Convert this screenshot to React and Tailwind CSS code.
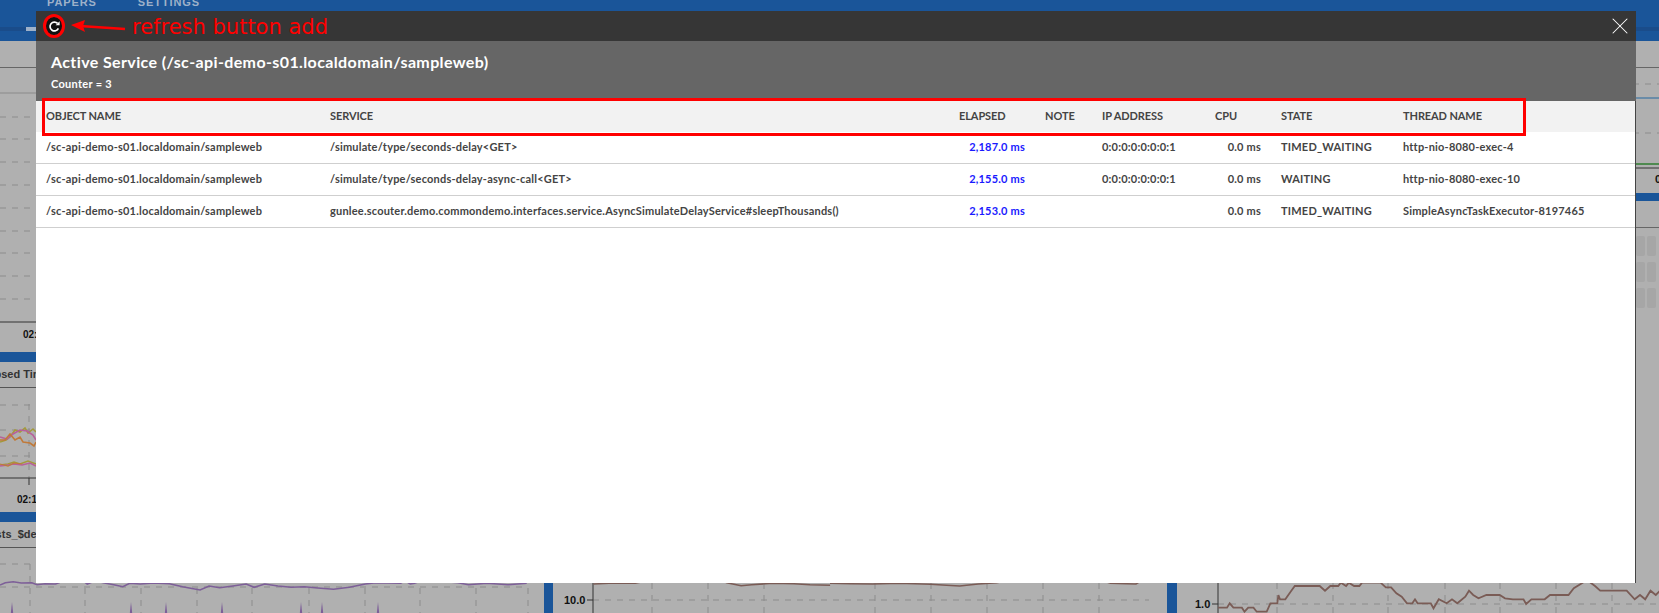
import { X } from "lucide-react";

const sx = 1 / 1.889;

// traced from the chart strips: x in zoom px, y in zoom px
const toPoints = (list, ox, fx, oy = 0) =>
  list.map(([x, y]) => `${(x * fx + ox).toFixed(1)},${(y / 3 + oy).toFixed(1)}`).join(" ");

const purpleLine = [
  [0, 75], [10, 68], [25, 65], [40, 69], [60, 68], [70, 74], [85, 71], [105, 72], [125, 60], [160, 66], [165, 72], [180, 62],
  [195, 68], [215, 74], [232, 80], [245, 70], [265, 72], [290, 69], [320, 71], [345, 80], [360, 85], [378, 90], [395, 78],
  [415, 83], [440, 78], [465, 72], [480, 82], [500, 72], [525, 78], [550, 82], [575, 80], [600, 84], [630, 88], [660, 82],
  [690, 72], [710, 68], [757, 70], [765, 62], [775, 72], [783, 70], [800, 60], [865, 68], [885, 74], [920, 70], [960, 74], [995, 70],
];

const brownLeft = [[1121, 72], [1160, 69], [1200, 70], [1230, 60], [1360, 60], [1373, 68], [1400, 77], [1420, 74], [1460, 70], [1500, 71], [1530, 74], [1568, 76]];
const brownMid = [[0, 70], [40, 71], [80, 72], [130, 70], [190, 73], [220, 76], [245, 78], [280, 72], [315, 68], [340, 60], [510, 60], [530, 70], [560, 71], [578, 72], [590, 60]];

const brownRight = [
  [733, 143], [750, 143], [755, 130], [762, 143], [778, 143], [783, 155], [790, 143], [800, 143], [806, 155], [825, 155], [832, 130],
  [845, 130], [847, 105], [850, 118], [860, 118], [870, 95], [878, 78], [925, 78], [935, 92], [945, 78], [960, 78], [965, 68], [975, 78],
  [980, 68], [990, 78], [1000, 78], [1005, 68], [1040, 68], [1050, 82], [1060, 82], [1070, 100], [1080, 110], [1090, 130], [1100, 130],
  [1105, 118], [1110, 130], [1135, 130], [1140, 145], [1150, 118], [1165, 130], [1175, 118], [1185, 130], [1200, 110], [1207, 92],
  [1215, 105], [1225, 115], [1240, 105], [1265, 105], [1275, 115], [1290, 118], [1310, 118], [1315, 132], [1325, 118], [1350, 118],
  [1360, 105], [1395, 105], [1405, 85], [1418, 72], [1430, 60], [1445, 78], [1455, 92], [1505, 92], [1520, 118], [1530, 105], [1540, 118],
  [1550, 92], [1560, 105], [1568, 92],
];

const rows = [
  {
    object: "/sc-api-demo-s01.localdomain/sampleweb",
    service: "/simulate/type/seconds-delay<GET>",
    elapsed: "2,187.0 ms",
    ip: "0:0:0:0:0:0:0:1",
    cpu: "0.0 ms",
    state: "TIMED_WAITING",
    thread: "http-nio-8080-exec-4",
  },
  {
    object: "/sc-api-demo-s01.localdomain/sampleweb",
    service: "/simulate/type/seconds-delay-async-call<GET>",
    elapsed: "2,155.0 ms",
    ip: "0:0:0:0:0:0:0:1",
    cpu: "0.0 ms",
    state: "WAITING",
    thread: "http-nio-8080-exec-10",
  },
  {
    object: "/sc-api-demo-s01.localdomain/sampleweb",
    service: "gunlee.scouter.demo.commondemo.interfaces.service.AsyncSimulateDelayService#sleepThousands()",
    elapsed: "2,153.0 ms",
    ip: "",
    cpu: "0.0 ms",
    state: "TIMED_WAITING",
    thread: "SimpleAsyncTaskExecutor-8197465",
  },
];

function Background() {
  return (
    <div className="flex h-full flex-col bg-[#b0b0b0] font-['Liberation_Sans',sans-serif]">
      <div className="h-[41px] shrink-0 bg-[#1a5599]">
        <div className="flex h-[27px] gap-[41px] pl-[47px]">
          <span className="-mt-[5px] text-[11px] leading-[14px] font-bold tracking-[0.9px] text-[#9eb1c9]">PAPERS</span>
          <span className="-mt-[5px] text-[11px] leading-[14px] font-bold tracking-[0.9px] text-[#9eb1c9]">SETTINGS</span>
        </div>
        <div className="flex h-[4px] bg-[#1a4c8a]">
          <div className="ml-[26px] w-[40px] bg-[#9eb1c9]" />
        </div>
      </div>
      <div className="flex min-h-0 flex-1">
        <div className="flex w-[544px] shrink-0 flex-col">
          <div className="h-[27px] border-b border-[#666]" />
          <svg className="h-[284px] w-full">
            <line x1="0" x2="544" y1="25" y2="25" stroke="#8a8a8a" />
            {[49, 71, 94, 117, 140, 163, 185, 208, 231].map((y) => (
              <line key={y} x1="0" x2="544" y1={y} y2={y} stroke="#8c8c8c" strokeDasharray="6 6" />
            ))}
            <line x1="0" x2="544" y1="254" y2="254" stroke="#333" />
            <text x="23" y="270" fontSize="10" fontWeight="700" fill="#111">
              02:10
            </text>
          </svg>
          <div className="h-[10px] bg-[#1a5599]" />
          <div className="flex h-[26px] items-center border-b border-[#555] text-[11px] font-bold whitespace-nowrap text-[#333]">
            <span className="-ml-[22px]">Elapsed Time</span>
          </div>
          <svg className="h-[124px] w-full">
            {[17, 42, 68].map((y) => (
              <line key={y} x1="0" x2="544" y1={y} y2={y} stroke="#8c8c8c" strokeDasharray="6 6" />
            ))}
            <line x1="29" x2="29" y1="16" y2="90" stroke="#8c8c8c" strokeDasharray="6 6" />
            <line x1="0" x2="544" y1="90" y2="90" stroke="#333" />
            <line x1="29" x2="29" y1="90" y2="97" stroke="#333" />
            <polyline fill="none" stroke="#a39a3c" strokeWidth="1.6" points="0,54 6,52 10,49 15,42 20,44 25,40 28,45 33,41 36,44" />
            <polyline fill="none" stroke="#b8609a" strokeWidth="1.6" points="0,49 7,51 13,46 20,42 27,43 33,47 36,52" />
            <polyline fill="none" stroke="#c07a3a" strokeWidth="1.6" points="0,52 5,52 10,46 15,52 20,49 23,54 30,55 34,58 36,54" />
            <polyline fill="none" stroke="#a39a3c" strokeWidth="1.6" points="0,77 8,76 14,74 20,76 28,73 36,76" />
            <polyline fill="none" stroke="#b8609a" strokeWidth="1.6" points="0,78 8,77 14,76 22,77 30,75 36,78" />
            <polyline fill="none" stroke="#c07a3a" strokeWidth="1.2" points="0,76 8,78 14,75 22,76" />
            <text x="17" y="115" fontSize="10" fontWeight="700" fill="#111">
              02:10
            </text>
          </svg>
          <div className="h-[10px] bg-[#1a5599]" />
          <div className="flex h-[26px] items-center border-b border-[#555] text-[11px] font-bold whitespace-nowrap text-[#333]">
            <span className="-ml-[38px]">Requests_$desc</span>
          </div>
          <svg className="min-h-0 w-full flex-1">
            <line x1="0" x2="528" y1="16" y2="16" stroke="#8c8c8c" strokeDasharray="6 6" />
            <line x1="0" x2="528" y1="39" y2="39" stroke="#8c8c8c" strokeDasharray="6 6" />
            {[30, 85, 141, 197, 252, 309, 365, 420, 476, 528].map((x) => (
              <line key={x} x1={x} x2={x} y1="16" y2="65" stroke="#8c8c8c" strokeDasharray="6 6" />
            ))}
            <polyline fill="none" stroke="#7d5f98" strokeWidth="1.6" points={toPoints(purpleLine, 0, sx, 12)} />
            {[12, 131, 166, 222, 301, 322, 378].map((x) => (
              <path key={x} d={`M${x - 1.2} 65 L${x} 54 L${x + 1.2} 65 Z`} fill="#7d5f98" />
            ))}
          </svg>
        </div>
        <div className="w-[9px] shrink-0 bg-[#1a5599]" />
        <div className="flex w-[614px] shrink-0 flex-col justify-end">
          <svg className="h-[34px] w-full">
            <line x1="40" x2="596" y1="21" y2="21" stroke="#8c8c8c" strokeDasharray="6 6" />
            {[99, 155, 211, 322, 378, 434, 490, 546].map((x) => (
              <line key={x} x1={x} x2={x} y1="4" y2="34" stroke="#8c8c8c" strokeDasharray="6 6" />
            ))}
            <line x1="40" x2="40" y1="0" y2="34" stroke="#333" />
            <line x1="34" x2="40" y1="21" y2="21" stroke="#333" />
            <text x="11" y="25" fontSize="11" fontWeight="700" fill="#111">
              10.0
            </text>
            <polyline fill="none" stroke="#7a5c56" strokeWidth="1.6" points={toPoints(brownLeft, -553, sx, -19)} />
            <polyline fill="none" stroke="#7a5c56" strokeWidth="1.6" points={toPoints(brownMid, 277, sx, -19)} />
          </svg>
        </div>
        <div className="w-[10px] shrink-0 bg-[#1a5599]" />
        <div className="flex min-w-0 flex-1 flex-col overflow-hidden">
          <div className="h-[27px] shrink-0 border-b border-[#666]" />
          <svg className="h-[125px] w-full shrink-0">
            <line x1="0" x2="482" y1="16" y2="16" stroke="#8c8c8c" strokeDasharray="6 6" />
            <line x1="0" x2="482" y1="30" y2="30" stroke="#6a8ca8" strokeWidth="2" />
            <line x1="0" x2="482" y1="65" y2="65" stroke="#8c8c8c" strokeDasharray="6 6" />
            <line x1="0" x2="482" y1="96" y2="96" stroke="#4f8a50" strokeWidth="2" />
            <line x1="0" x2="482" y1="100" y2="100" stroke="#333" />
            <text x="478" y="115" fontSize="11" fontWeight="700" fill="#111">
              02:10
            </text>
          </svg>
          <div className="h-[8px] shrink-0 bg-[#1a5599]" />
          <div className="h-[27px] shrink-0 border-b border-[#666]" />
          <div className="flex shrink-0 flex-col gap-[6px] pt-[8px] pl-[8px]">
            {[0, 1, 2].map((r) => (
              <div key={r} className="flex gap-[2px]">
                {Array.from({ length: 43 }).map((_, i) => (
                  <div key={i} className="h-[20px] w-[9px] shrink-0 rounded-[2px] bg-[#a6a6a6]" />
                ))}
              </div>
            ))}
          </div>
          <div className="flex-1" />
          <svg className="h-[34px] w-full shrink-0">
            <line x1="41" x2="482" y1="25" y2="25" stroke="#8c8c8c" strokeDasharray="6 6" />
            {[100, 156, 211, 268, 323, 379, 435].map((x) => (
              <line key={x} x1={x} x2={x} y1="4" y2="34" stroke="#8c8c8c" strokeDasharray="6 6" />
            ))}
            <line x1="41" x2="41" y1="0" y2="34" stroke="#333" />
            <line x1="35" x2="41" y1="25" y2="25" stroke="#333" />
            <text x="18" y="29" fontSize="11" fontWeight="700" fill="#111">
              1.0
            </text>
            <polyline fill="none" stroke="#7a5c56" strokeWidth="1.8" points={toPoints(brownRight, -347, sx, -19)} />
          </svg>
        </div>
      </div>
    </div>
  );
}

function ActiveServiceModal() {
  return (
    <div className="absolute top-[11px] left-[36px] flex h-[572px] w-[1600px] flex-col font-['Lato',sans-serif]">
      <div className="flex h-[30px] shrink-0 items-center justify-between bg-[#363636] pr-[2px] pl-[9px]">
        <button className="flex h-[18px] w-[18px] items-center justify-center rounded-full bg-[#111]">
          <svg width="13" height="13" viewBox="0 0 13 13" fill="none" stroke="#fff" strokeWidth="1.7">
            <path d="M10.4 8.4 A4.4 4.4 0 1 1 9.6 3.4" />
            <path d="M7.6 5.2 L11.6 5.2 L11.6 1.2 Z" fill="#fff" stroke="none" />
          </svg>
        </button>
        <X size={28} strokeWidth={0.9} className="text-white" />
      </div>
      <div className="flex h-[60px] shrink-0 flex-col bg-[#666] pt-[11px] pl-[15px] text-white">
        <div className="text-[16px] leading-[20px] font-bold tracking-[0.38px]">
          Active Service (/sc-api-demo-s01.localdomain/sampleweb)
        </div>
        <div className="mt-[4px] text-[11px] leading-[16px] font-bold tracking-[0.3px]">Counter = 3</div>
      </div>
      <div className="min-h-0 flex-1 border-r border-[#444] bg-white">
        <table className="w-full table-fixed border-separate border-spacing-0 text-left text-[11px] font-bold tracking-[0.2px] text-[#444]">
          <colgroup>
            <col className="w-[284px]" />
            <col className="w-[629px]" />
            <col className="w-[86px]" />
            <col className="w-[57px]" />
            <col className="w-[113px]" />
            <col className="w-[66px]" />
            <col className="w-[122px]" />
            <col />
          </colgroup>
          <thead>
            <tr className="h-[31px] bg-[#f2f2f2] tracking-[-0.1px]">
              <th className="pl-[10px] font-bold">OBJECT NAME</th>
              <th className="pl-[10px] font-bold">SERVICE</th>
              <th className="pl-[10px] font-bold">ELAPSED</th>
              <th className="pl-[10px] font-bold">NOTE</th>
              <th className="pl-[10px] font-bold">IP ADDRESS</th>
              <th className="pl-[10px] font-bold">CPU</th>
              <th className="pl-[10px] font-bold">STATE</th>
              <th className="pl-[10px] font-bold">THREAD NAME</th>
            </tr>
          </thead>
          <tbody>
            {rows.map((row, i) => (
              <tr key={i} className="h-[32px]">
                <td className="border-b border-[#cfcfcf] pl-[10px]">{row.object}</td>
                <td className="border-b border-[#cfcfcf] pl-[10px]">{row.service}</td>
                <td className="border-b border-[#cfcfcf] pr-[10px] text-right text-[#1a1aff]">{row.elapsed}</td>
                <td className="border-b border-[#cfcfcf]" />
                <td className="border-b border-[#cfcfcf] pl-[10px]">{row.ip}</td>
                <td className="border-b border-[#cfcfcf] pr-[10px] text-right">{row.cpu}</td>
                <td className="border-b border-[#cfcfcf] pl-[10px]">{row.state}</td>
                <td className="border-b border-[#cfcfcf] pl-[10px]">{row.thread}</td>
              </tr>
            ))}
          </tbody>
        </table>
      </div>
    </div>
  );
}

// red markup someone drew on top of the screenshot
function Annotations() {
  return (
    <>
      <div className="absolute top-[98px] left-[42px] h-[38px] w-[1484px] border-[3px] border-[#f00]" />
      <svg className="absolute top-0 left-0 h-[50px] w-[135px]" fill="none">
        <ellipse cx="54" cy="26" rx="9.5" ry="10.5" stroke="#f00" strokeWidth="3" />
        <line x1="125" y1="29" x2="80" y2="26" stroke="#f00" strokeWidth="2.5" />
        <path d="M71 25 L85 20 L83 26 L85 32 Z" fill="#f00" />
      </svg>
      <span className="absolute top-[12px] left-[132px] text-[21px] leading-[30px] whitespace-nowrap text-[#f00] font-['DejaVu_Sans',sans-serif]">
        refresh button add
      </span>
    </>
  );
}

export default function App() {
  return (
    <div className="relative h-[613px] w-full overflow-hidden">
      <Background />
      <ActiveServiceModal />
      <Annotations />
    </div>
  );
}
